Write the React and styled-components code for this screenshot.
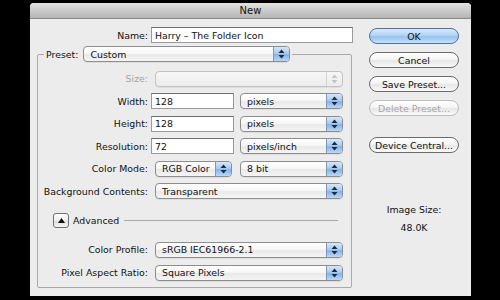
import React from "react";
import styled, { createGlobalStyle } from "styled-components";

const GlobalStyle = createGlobalStyle`
  html, body {
    margin: 0;
    padding: 0;
    background: #000;
    width: 500px;
    height: 300px;
    overflow: hidden;
  }
  body {
    font-family: "DejaVu Sans", "Liberation Sans", sans-serif;
    font-size: 9.4px;
    color: #111;
  }
`;

const Window = styled.div`
  margin: 3px 0 0 30px;
  width: 441px;
  height: 293px;
  background: #ececec;
  border-radius: 4px 4px 0 0;
  display: flex;
  flex-direction: column;
  overflow: hidden;
`;

const TitleBar = styled.div`
  height: 15px;
  flex: none;
  background: linear-gradient(#e2e2e2, #cbcbcb 50%, #b4b4b4);
  border-bottom: 1px solid #8a8a8a;
  display: flex;
  align-items: center;
  justify-content: center;
  font-size: 10px;
  color: #111;
`;

const Body = styled.div`
  display: flex;
  padding: 8px 0 0 7px;
`;

const LeftColumn = styled.div`
  width: 315px;
  display: flex;
  flex-direction: column;
`;

const NameRow = styled.div`
  display: grid;
  grid-template-columns: 111px 202px;
  column-gap: 3px;
  align-items: center;
  height: 16px;
`;

const Label = styled.span`
  text-align: right;
  white-space: nowrap;
  color: ${(p) => (p.$disabled ? "#a3a3a3" : "#111")};
`;

const TextInput = styled.div`
  box-sizing: border-box;
  height: ${(p) => p.$h || 16}px;
  width: ${(p) => (p.$w ? `${p.$w}px` : "100%")};
  background: #fff;
  border: 1px solid #9a9a9a;
  border-top-color: #6e6e6e;
  padding-left: 3px;
  display: flex;
  align-items: center;
  white-space: nowrap;
  overflow: hidden;
`;

const Group = styled.fieldset`
  margin: 3px 0 0 0;
  padding: 0 8px 7px 0;
  border: 1px solid #a9a9a9;
  border-radius: 2px;
  width: 315px;
  height: 242px;
  box-sizing: border-box;
  min-inline-size: 0;
`;

const Legend = styled.legend`
  margin-left: 6px;
  padding: 0 2px;
  display: flex;
  align-items: center;
  gap: 5px;
  height: 16px;
`;

const Select = styled.div`
  box-sizing: border-box;
  height: ${(p) => p.$h || 16}px;
  width: ${(p) => p.$w}px;
  margin-left: ${(p) => p.$ml || 0}px;
  border: 1px solid ${(p) => (p.$disabled ? "#c2c2c2" : "#8d8d8d")};
  border-radius: 4px;
  background: ${(p) =>
    p.$disabled
      ? "linear-gradient(#f6f6f6, #ececec)"
      : "linear-gradient(#ffffff, #f7f7f7 45%, #e9e9e9 55%, #f5f5f5)"};
  display: flex;
  align-items: stretch;
  overflow: hidden;
  box-shadow: 0 1px 0 rgba(0, 0, 0, 0.06);
`;

const SelectText = styled.span`
  flex: 1;
  display: flex;
  align-items: center;
  padding-left: 6px;
  white-space: nowrap;
  overflow: hidden;
`;

const Cap = styled.span`
  width: 15px;
  flex: none;
  display: flex;
  align-items: center;
  justify-content: center;
  border-left: 1px solid ${(p) => (p.$disabled ? "#d4d4d4" : "#7f97b9")};
  background: ${(p) =>
    p.$disabled
      ? "transparent"
      : "linear-gradient(#d6e7fa, #a9cbf1 45%, #86b3ea 55%, #b9d8f7)"};
`;

const Rows = styled.div`
  display: flex;
  flex-direction: column;
  gap: 6.6px;
  padding-top: 8.5px;
`;

const Row = styled.div`
  display: grid;
  grid-template-columns: 110px 1fr;
  column-gap: 3px;
  align-items: center;
  height: 16px;
  margin-top: ${(p) => p.$mt || 0}px;
`;

const Fields = styled.div`
  display: flex;
  align-items: center;
  gap: ${(p) => p.$gap || 6}px;
`;

const AdvancedRow = styled.div`
  display: flex;
  align-items: center;
  height: 15px;
  margin: 14px 5px 0 15px;
`;

const Disclosure = styled.div`
  box-sizing: border-box;
  width: 16px;
  height: 15px;
  border: 1px solid #6f6f6f;
  border-radius: 3px;
  background: linear-gradient(#ffffff, #ededed 50%, #dedede 55%, #f4f4f4);
  display: flex;
  align-items: center;
  justify-content: center;
`;

const AdvancedText = styled.span`
  margin: 0 5px 0 4px;
`;

const Rule = styled.div`
  flex: 1;
  height: 1px;
  background: #a9a9a9;
`;

const RightColumn = styled.div`
  margin-left: 17px;
  width: 90px;
  display: flex;
  flex-direction: column;
  padding-top: 1px;
`;

const Button = styled.div`
  box-sizing: border-box;
  height: 16px;
  margin-top: ${(p) => p.$mt || 0}px;
  border-radius: 8px;
  border: 1px solid
    ${(p) => (p.$primary ? "#4f72a0" : p.$disabled ? "#bdbdbd" : "#6a6a6a")};
  background: ${(p) =>
    p.$primary
      ? "linear-gradient(#d9eafb, #b3d3f5 45%, #97c2f0 55%, #c4e0fa)"
      : "linear-gradient(#ffffff, #f5f5f5 45%, #e6e6e6 55%, #fbfbfb)"};
  color: ${(p) => (p.$disabled ? "#a8a8a8" : "#111")};
  display: flex;
  align-items: center;
  justify-content: center;
  white-space: nowrap;
`;

const SizeInfo = styled.div`
  margin-top: 51px;
  display: flex;
  flex-direction: column;
  align-items: center;
  gap: 7px;
`;

const Arrows = ({ disabled }) => (
  <svg width="7" height="10" viewBox="0 0 7 10">
    <path d="M3.5 0.5 L6.5 4 H0.5 Z" fill={disabled ? "#c4c4c4" : "#1d2b40"} />
    <path d="M3.5 9.5 L6.5 6 H0.5 Z" fill={disabled ? "#c4c4c4" : "#1d2b40"} />
  </svg>
);

const PopUp = ({ w, ml, h, disabled, children }) => (
  <Select $w={w} $ml={ml} $h={h} $disabled={disabled}>
    <SelectText>{children}</SelectText>
    <Cap $disabled={disabled}>
      <Arrows disabled={disabled} />
    </Cap>
  </Select>
);

export default function App() {
  return (
    <>
      <GlobalStyle />
      <Window>
        <TitleBar>New</TitleBar>
        <Body>
          <LeftColumn>
            <NameRow>
              <Label>Name:</Label>
              <TextInput>Harry – The Folder Icon</TextInput>
            </NameRow>
            <Group>
              <Legend>
                <Label>Preset:</Label>
                <PopUp w={207}>Custom</PopUp>
              </Legend>
              <Rows>
                <Row>
                  <Label $disabled>Size:</Label>
                  <PopUp w={188} ml={4} disabled></PopUp>
                </Row>
                <Row>
                  <Label>Width:</Label>
                  <Fields>
                    <TextInput $w={83}>128</TextInput>
                    <PopUp w={103}>pixels</PopUp>
                  </Fields>
                </Row>
                <Row>
                  <Label>Height:</Label>
                  <Fields>
                    <TextInput $w={83}>128</TextInput>
                    <PopUp w={103}>pixels</PopUp>
                  </Fields>
                </Row>
                <Row>
                  <Label>Resolution:</Label>
                  <Fields>
                    <TextInput $w={83}>72</TextInput>
                    <PopUp w={103}>pixels/inch</PopUp>
                  </Fields>
                </Row>
                <Row>
                  <Label>Color Mode:</Label>
                  <Fields $gap={8}>
                    <PopUp w={77} ml={4}>RGB Color</PopUp>
                    <PopUp w={103}>8 bit</PopUp>
                  </Fields>
                </Row>
                <Row>
                  <Label>Background Contents:</Label>
                  <PopUp w={188} ml={4}>Transparent</PopUp>
                </Row>
              </Rows>
              <AdvancedRow>
                <Disclosure>
                  <svg width="7" height="5" viewBox="0 0 7 5">
                    <path d="M3.5 0 L7 5 H0 Z" fill="#111" />
                  </svg>
                </Disclosure>
                <AdvancedText>Advanced</AdvancedText>
                <Rule />
              </AdvancedRow>
              <Rows>
                <Row $mt={5}>
                  <Label>Color Profile:</Label>
                  <PopUp w={188} ml={4}>sRGB IEC61966-2.1</PopUp>
                </Row>
                <Row>
                  <Label>Pixel Aspect Ratio:</Label>
                  <PopUp w={188} ml={4}>Square Pixels</PopUp>
                </Row>
              </Rows>
            </Group>
          </LeftColumn>
          <RightColumn>
            <Button $primary>OK</Button>
            <Button $mt={8}>Cancel</Button>
            <Button $mt={8}>Save Preset...</Button>
            <Button $mt={8} $disabled>Delete Preset...</Button>
            <Button $mt={21}>Device Central...</Button>
            <SizeInfo>
              <span>Image Size:</span>
              <span>48.0K</span>
            </SizeInfo>
          </RightColumn>
        </Body>
      </Window>
    </>
  );
}
